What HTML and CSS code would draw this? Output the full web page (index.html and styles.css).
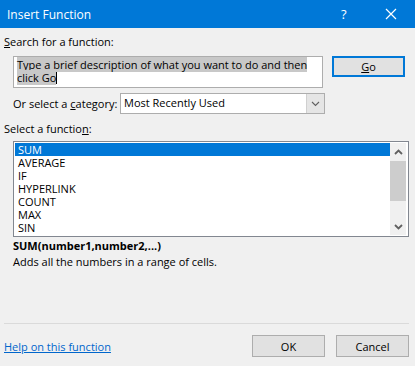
FILE: index.html
```html
<!DOCTYPE html>
<html lang="en">
<head>
    <meta charset="UTF-8">
    <title>Insert Function</title>
    <link rel="stylesheet" href="styles.css">
</head>
<body>
<div class="dialog">
    <div class="titlebar">
        <span class="title">Insert Function</span>
        <span class="help">?</span>
        <span class="close">
            <svg width="12" height="12" viewBox="0 0 12 12"><path d="M1 1L11 11M11 1L1 11" stroke="#fff" stroke-width="1.2"/></svg>
        </span>
    </div>

    <div class="content">
        <div class="label"><u>S</u>earch for a function:</div>
        <div class="search-row">
            <div class="search-box">
                <span class="sel">Type a brief description of what you want to do and then</span><br>
                <span class="sel">click Go</span><span class="caret"></span>
            </div>
            <button class="btn go"><u>G</u>o</button>
        </div>

        <div class="category-row">
            <span>Or select a <u>c</u>ategory:</span>
            <div class="dropdown">
                <span class="dd-text">Most Recently Used</span>
                <span class="dd-arrow">
                    <svg width="9" height="6" viewBox="0 0 9 6"><path d="M1 1L4.5 4.5L8 1" stroke="#606060" stroke-width="1.1" fill="none"/></svg>
                </span>
            </div>
        </div>

        <div class="label fn-label">Select a functio<u>n</u>:</div>
        <div class="listbox">
            <div class="items">
                <div class="item selected">SUM</div>
                <div class="item">AVERAGE</div>
                <div class="item">IF</div>
                <div class="item">HYPERLINK</div>
                <div class="item">COUNT</div>
                <div class="item">MAX</div>
                <div class="item">SIN</div>
            </div>
            <div class="scrollbar">
                <span class="arrow">
                    <svg width="9" height="6" viewBox="0 0 9 6"><path d="M1 5L4.5 1.5L8 5" stroke="#606060" stroke-width="1.8" fill="none"/></svg>
                </span>
                <div class="track"><div class="thumb"></div></div>
                <span class="arrow">
                    <svg width="9" height="6" viewBox="0 0 9 6"><path d="M1 1L4.5 4.5L8 1" stroke="#606060" stroke-width="1.8" fill="none"/></svg>
                </span>
            </div>
        </div>

        <div class="syntax">SUM(number1,number2,...)</div>
        <div class="desc">Adds all the numbers in a range of cells.</div>
    </div>

    <div class="footer">
        <a class="help-link" href="#">Help on this function</a>
        <div class="buttons">
            <button class="btn">OK</button>
            <button class="btn">Cancel</button>
        </div>
    </div>
</div>
</body>
</html>
```

FILE: styles.css
```css
body {
    margin: 0;
    background: #f0f0f0;
    font-family: "Open Sans", "Noto Sans", sans-serif;
    font-size: 11px;
    color: #000;
}
.dialog {
    width: 415px;
    height: 366px;
    display: flex;
    flex-direction: column;
}
.titlebar {
    height: 28px;
    background: #0078d7;
    color: white;
    display: flex;
    align-items: center;
    font-size: 12px;
}
.title {
    flex: 1;
    padding-left: 7px;
}
.help {
    width: 14px;
    font-size: 13px;
    margin-right: 30px;
}
.close {
    width: 12px;
    height: 12px;
    margin-right: 18px;
    display: flex;
}

.content {
    padding: 6px 6px 0 4px;
    flex: 1;
}
.label {
    height: 16px;
    line-height: 16px;
}
.search-row {
    display: flex;
    margin-top: 6px;
    padding-left: 9px;
}
.search-box {
    width: 302px;
    height: 28px;
    border: 1px solid #adadad;
    background: white;
    padding: 1px 3px;
    line-height: 13px;
}
.sel {
    background: #c8c8c8;
}
.caret {
    display: inline-block;
    width: 1px;
    height: 12px;
    background: #000;
    vertical-align: -2px;
}
.btn {
    font-family: inherit;
    font-size: 11px;
    width: 73px;
    height: 21px;
    background: #e1e1e1;
    border: 1px solid #adadad;
    padding: 0;
    color: #000;
}
.btn.go {
    margin-left: 9px;
    border: 2px solid #0078d7;
}

.category-row {
    display: flex;
    align-items: center;
    margin-top: 5px;
    padding-left: 9px;
    height: 21px;
}
.category-row > span {
    width: 107px;
}
.dropdown {
    width: 203px;
    height: 19px;
    border: 1px solid #adadad;
    background: white;
    display: flex;
}
.dd-text {
    flex: 1;
    padding-left: 3px;
    line-height: 18px;
}
.dd-arrow {
    width: 17px;
    background: #e5e5e5;
    border-left: 1px solid #d0d0d0;
    display: flex;
    align-items: center;
    justify-content: center;
}

.fn-label {
    margin-top: 7px;
}
.listbox {
    margin: 4px 0 0 9px;
    height: 92px;
    border: 1px solid #828790;
    background: white;
    display: flex;
    padding: 1px 2px 1px 1px;
}
.items {
    flex: 1;
}
.item {
    height: 13px;
    line-height: 13px;
    padding-left: 3px;
}
.item.selected {
    background: #0078d7;
    color: white;
}
.scrollbar {
    width: 16px;
    background: #f0f0f0;
    display: flex;
    flex-direction: column;
}
.arrow {
    height: 17px;
    display: flex;
    align-items: center;
    justify-content: center;
}
.track {
    flex: 1;
}
.thumb {
    height: 40px;
    margin-top: 1px;
    background: #cdcdcd;
}
.syntax {
    font-weight: bold;
    margin: 1px 0 0 9px;
    line-height: 16px;
}
.desc {
    margin: 0 0 0 9px;
    line-height: 16px;
}

.footer {
    margin: 0 6px 9px 4px;
    border-top: 1px solid #dadada;
    padding-top: 11px;
    display: flex;
    align-items: center;
    justify-content: space-between;
}
.help-link {
    color: #0066cc;
    text-decoration: underline;
}
.buttons {
    display: flex;
    gap: 11px;
}
.buttons .btn {
    height: 22px;
}
```
